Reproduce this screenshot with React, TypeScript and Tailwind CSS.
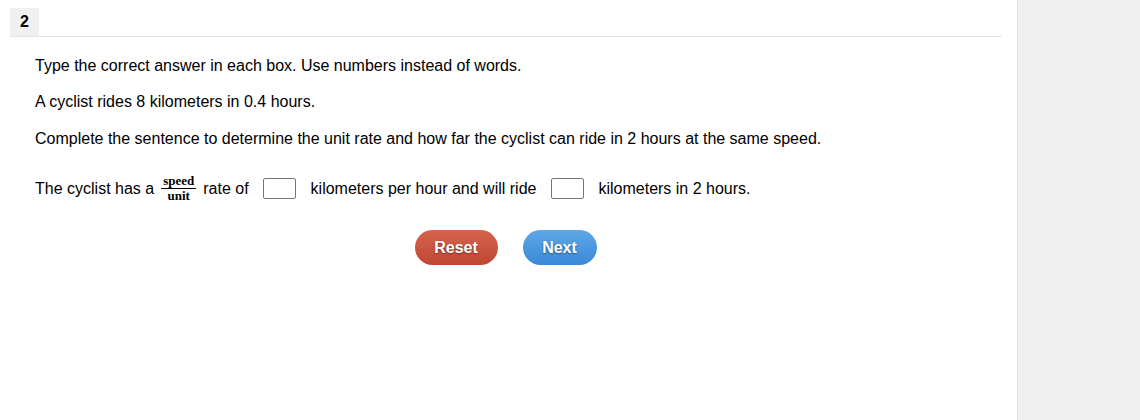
export default function App() {
  return (
    <div className="flex h-[420px] w-[1140px] bg-white font-['Liberation_Sans',Arial,sans-serif] text-black">
      {/* Main question area */}
      <div className="w-[1017px] shrink-0 pl-[10px] pr-[15px] pt-[8px]">
        <div className="flex border-b border-[#e3e3e3]">
          <div className="flex h-[28px] w-[29px] items-center justify-center bg-[#f0f0f0] text-[16px] font-bold">
            2
          </div>
        </div>

        <div className="pl-[25px] pt-[20px] text-[16px] leading-[18px]">
          <p>Type the correct answer in each box. Use numbers instead of words.</p>
          <p className="mt-[18px]">A cyclist rides 8 kilometers in 0.4 hours.</p>
          <p className="mt-[19px]">
            Complete the sentence to determine the unit rate and how far the cyclist can ride in 2 hours at the same speed.
          </p>

          <div className="mt-[27px] flex items-center">
            <span>The cyclist has a</span>
            <span className="ml-[7px] mr-[7px] inline-flex flex-col items-center font-['Liberation_Serif',serif] text-[13px] font-bold leading-[12px]">
              <span className="px-[2px] pb-[1px]">speed</span>
              <span className="w-full border-t border-black" />
              <span className="pt-[1px]">unit</span>
            </span>
            <span>rate of</span>
            <input
              type="text"
              className="ml-[14px] mr-[15px] h-[21px] w-[33px] rounded-[2px] border border-[#767676] bg-white outline-none"
            />
            <span>kilometers per hour and will ride</span>
            <input
              type="text"
              className="ml-[15px] mr-[14px] h-[21px] w-[33px] rounded-[2px] border border-[#767676] bg-white outline-none"
            />
            <span>kilometers in 2 hours.</span>
          </div>
        </div>

        <div className="mt-[28px] flex justify-center gap-[25px] pr-[1px]">
          <button className="h-[35px] w-[83px] rounded-full bg-gradient-to-b from-[#d6644e] to-[#bf4732] text-[16px] font-bold text-white [text-shadow:0_1px_2px_rgba(0,0,0,0.45)]">
            Reset
          </button>
          <button className="h-[35px] w-[74px] rounded-full bg-gradient-to-b from-[#5ea7e6] to-[#3a89d9] text-[16px] font-bold text-white [text-shadow:0_1px_2px_rgba(0,0,0,0.45)]">
            Next
          </button>
        </div>
      </div>

      {/* Right sidebar */}
      <div className="flex-1 border-l border-[#e4e4e4] bg-[#f0f0f0]" />
    </div>
  );
}
